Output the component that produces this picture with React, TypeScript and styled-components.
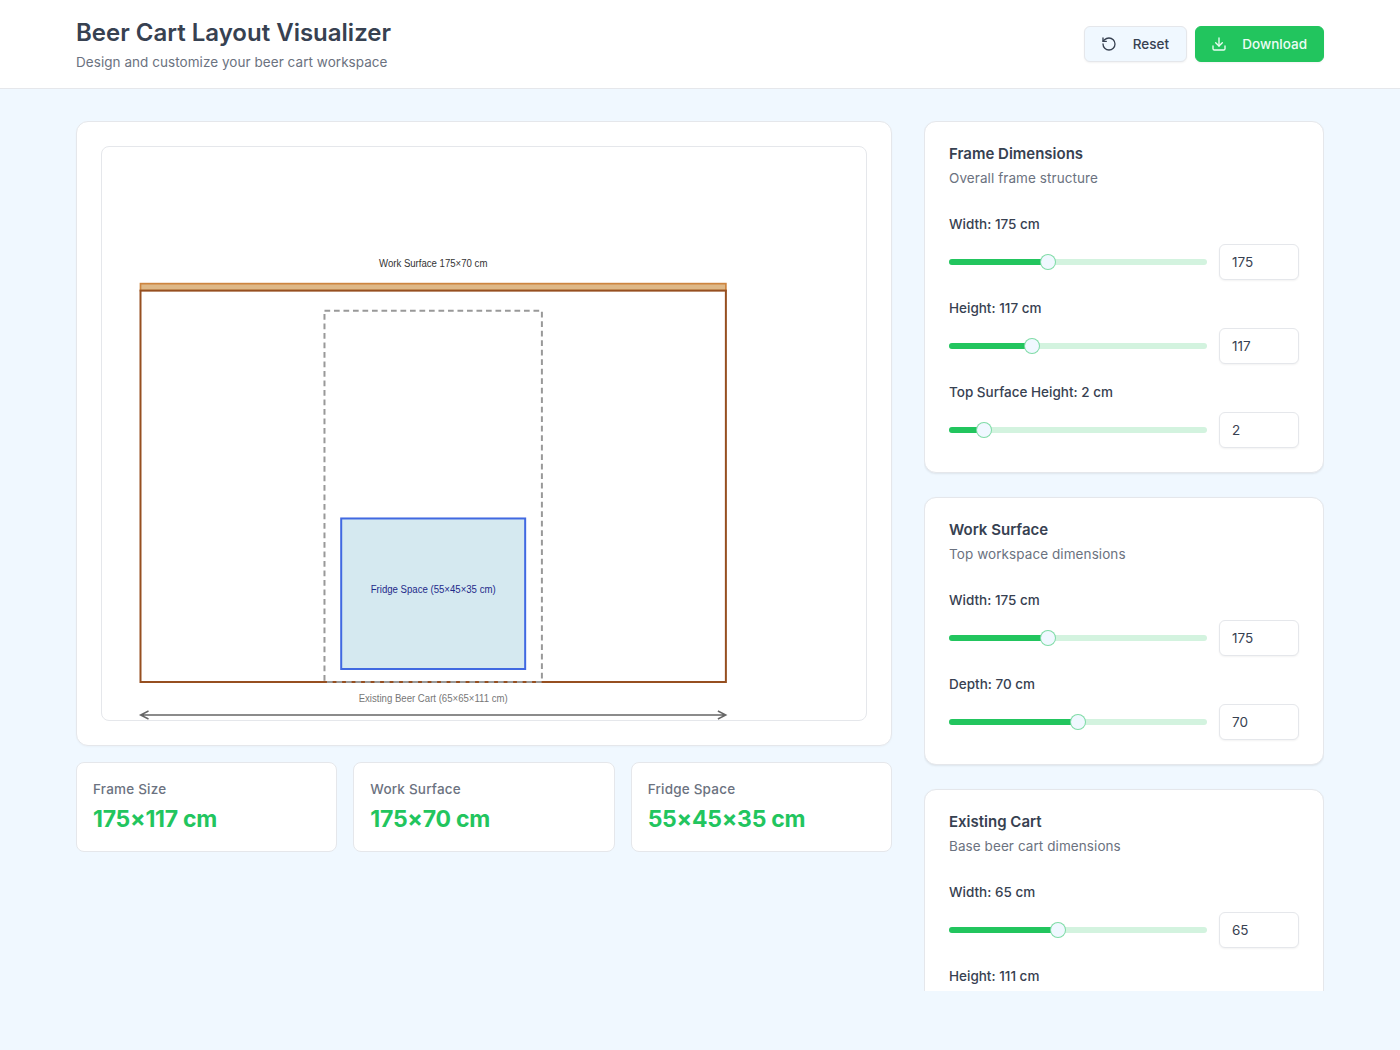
import { useState } from "react";
import type { ReactNode } from "react";
import styled, { createGlobalStyle } from "styled-components";
import * as Slider from "@radix-ui/react-slider";
import { Download, RotateCcw } from "lucide-react";

const defaults = {
  frameWidth: 175,
  frameHeight: 117,
  topHeight: 2,
  surfaceWidth: 175,
  surfaceDepth: 70,
  cartWidth: 65,
  cartHeight: 111,
  fridgeWidth: 55,
  fridgeHeight: 45,
  fridgeDepth: 35,
};

type Dims = typeof defaults;

const sections: {
  title: string;
  note: string;
  rows: { key: keyof Dims; label: string; min: number; max: number }[];
}[] = [
  {
    title: "Frame Dimensions",
    note: "Overall frame structure",
    rows: [
      { key: "frameWidth", label: "Width", min: 100, max: 300 },
      { key: "frameHeight", label: "Height", min: 80, max: 200 },
      { key: "topHeight", label: "Top Surface Height", min: 1, max: 10 },
    ],
  },
  {
    title: "Work Surface",
    note: "Top workspace dimensions",
    rows: [
      { key: "surfaceWidth", label: "Width", min: 100, max: 300 },
      { key: "surfaceDepth", label: "Depth", min: 40, max: 100 },
    ],
  },
  {
    title: "Existing Cart",
    note: "Base beer cart dimensions",
    rows: [
      { key: "cartWidth", label: "Width", min: 40, max: 100 },
      { key: "cartHeight", label: "Height", min: 80, max: 150 },
    ],
  },
];

const SCALE = 3.345;

// the drawing's captions are slightly condensed
const Caption = ({ x, y, fill, children }: { x: number; y: number; fill: string; children: ReactNode }) => (
  <text
    transform={`translate(${x} ${y}) scale(0.96 1)`}
    textAnchor="middle"
    fontFamily="Liberation Sans, sans-serif"
    fontSize="10"
    fill={fill}
  >
    {children}
  </text>
);

const Drawing = ({ dims }: { dims: Dims }) => {
  const w = dims.frameWidth * SCALE;
  const h = dims.frameHeight * SCALE;
  const left = 38.5;
  const base = 535;
  const top = base - h;
  const mid = left + w / 2;
  const cartW = dims.cartWidth * SCALE;
  const cartH = dims.cartHeight * SCALE;
  const fridgeW = dims.fridgeWidth * SCALE;
  const fridgeH = dims.fridgeHeight * SCALE;
  const fridgeBottom = base - 13;

  return (
    <svg width="764" height="573" viewBox="0 0 764 573">
      <Caption x={mid} y={top - 24} fill="#333">
        Work Surface {dims.surfaceWidth}×{dims.surfaceDepth} cm
      </Caption>
      <rect x={left} y={top - 7} width={w} height={7} fill="#deb887" stroke="#cd853f" strokeWidth="1.7" />
      <rect x={left} y={top} width={w} height={h} fill="#fff" stroke="#964f20" strokeWidth="2" />
      <rect
        x={mid - cartW / 2}
        y={base - cartH}
        width={cartW}
        height={cartH}
        fill="none"
        stroke="#999"
        strokeWidth="2"
        strokeDasharray="5.7 3.8"
      />
      <rect
        x={mid - fridgeW / 2}
        y={fridgeBottom - fridgeH}
        width={fridgeW}
        height={fridgeH}
        fill="#d5e9f0"
        stroke="#4169e1"
        strokeWidth="2"
      />
      <Caption x={mid} y={fridgeBottom - fridgeH / 2 - 1} fill="#1e2a8a">
        Fridge Space ({dims.fridgeWidth}×{dims.fridgeHeight}×{dims.fridgeDepth} cm)
      </Caption>
      <Caption x={mid} y={base + 20} fill="#777">
        Existing Beer Cart ({dims.cartWidth}×{dims.cartWidth}×{dims.cartHeight} cm)
      </Caption>
      <path
        d={`M${left} 568H${left + w}M${left + 8} 564L${left} 568L${left + 8} 572M${left + w - 8} 564L${left + w} 568L${left + w - 8} 572`}
        fill="none"
        stroke="#666"
        strokeWidth="1.4"
      />
    </svg>
  );
};

const App = () => {
  const [dims, setDims] = useState<Dims>(defaults);

  const update = (key: keyof Dims, value: number) => {
    setDims({ ...dims, [key]: value });
  };

  return (
    <>
      <GlobalStyle />
      <Header>
        <HeaderInner>
          <div>
            <Title>Beer Cart Layout Visualizer</Title>
            <Subtitle>Design and customize your beer cart workspace</Subtitle>
          </div>
          <Actions>
            <ResetButton type="button" onClick={() => setDims(defaults)}>
              <RotateCcw size={16} />
              Reset
            </ResetButton>
            <DownloadButton type="button">
              <Download size={16} />
              Download
            </DownloadButton>
          </Actions>
        </HeaderInner>
      </Header>
      <Main>
        <LeftColumn>
          <PreviewCard>
            <Canvas>
              <Drawing dims={dims} />
            </Canvas>
          </PreviewCard>
          <Stats>
            <StatCard>
              <StatLabel>Frame Size</StatLabel>
              <StatValue>
                {dims.frameWidth}×{dims.frameHeight} cm
              </StatValue>
            </StatCard>
            <StatCard>
              <StatLabel>Work Surface</StatLabel>
              <StatValue>
                {dims.surfaceWidth}×{dims.surfaceDepth} cm
              </StatValue>
            </StatCard>
            <StatCard>
              <StatLabel>Fridge Space</StatLabel>
              <StatValue>
                {dims.fridgeWidth}×{dims.fridgeHeight}×{dims.fridgeDepth} cm
              </StatValue>
            </StatCard>
          </Stats>
        </LeftColumn>
        <Controls>
          {sections.map((section) => (
            <ControlCard key={section.title}>
              <CardTitle>{section.title}</CardTitle>
              <CardNote>{section.note}</CardNote>
              {section.rows.map((row) => (
                <Field key={row.key}>
                  <FieldLabel>
                    {row.label}: {dims[row.key]} cm
                  </FieldLabel>
                  <FieldRow>
                    <SliderRoot
                      min={row.min}
                      max={row.max}
                      value={[dims[row.key]]}
                      onValueChange={(v: number[]) => update(row.key, v[0])}
                    >
                      <SliderTrack>
                        <SliderRange />
                      </SliderTrack>
                      <SliderThumb />
                    </SliderRoot>
                    <NumberInput
                      type="number"
                      value={dims[row.key]}
                      onChange={(e) => update(row.key, Number(e.target.value))}
                    />
                  </FieldRow>
                </Field>
              ))}
            </ControlCard>
          ))}
        </Controls>
      </Main>
    </>
  );
};

const GlobalStyle = createGlobalStyle`
  * {
    box-sizing: border-box;
  }

  body {
    margin: 0;
    min-height: 100vh;
    background: #f0f8ff;
    color: #374151;
    font-family: Inter, "Noto Sans", sans-serif;
  }
`;

const Header = styled.header`
  height: 89px;
  background: #fff;
  border-bottom: 1px solid #e5e7eb;
`;

const HeaderInner = styled.div`
  width: 1248px;
  height: 88px;
  margin: 0 auto;
  display: flex;
  align-items: center;
  justify-content: space-between;
`;

const Title = styled.h1`
  margin: 0 0 3px;
  font-size: 24px;
  line-height: 32px;
  font-weight: 600;
  color: #374151;
`;

const Subtitle = styled.p`
  margin: 0;
  font-size: 13.5px;
  line-height: 20px;
  letter-spacing: 0.05px;
  color: #6b7280;
`;

const Actions = styled.div`
  display: flex;
  gap: 8px;
`;

const ResetButton = styled.button`
  display: flex;
  align-items: center;
  justify-content: space-between;
  width: 103px;
  height: 36px;
  padding: 0 17px 0 16px;
  background: #f0f8ff;
  border: 1px solid #e5e7eb;
  border-radius: 6px;
  box-shadow: 0 1px 2px rgba(0, 0, 0, 0.05);
  color: #374151;
  font: 500 13.5px Inter, sans-serif;
`;

const DownloadButton = styled(ResetButton)`
  width: 129px;
  padding: 0 16px 0 15px;
  background: #22c55e;
  border-color: #22c55e;
  color: #ecfdf5;
`;

const Main = styled.main`
  width: 1248px;
  margin: 0 auto;
  padding-top: 32px;
  display: grid;
  grid-template-columns: 1fr 400px;
  gap: 32px;
  align-items: start;
`;

const LeftColumn = styled.div`
  display: flex;
  flex-direction: column;
  gap: 16px;
`;

const PreviewCard = styled.section`
  padding: 24px;
  background: #fff;
  border: 1px solid #e5e7eb;
  border-radius: 12px;
  box-shadow: 0 1px 2px rgba(0, 0, 0, 0.03);
`;

const Canvas = styled.div`
  height: 575px;
  background: #fff;
  border: 1px solid #e5e7eb;
  border-radius: 8px;
  overflow: hidden;

  svg {
    display: block;
  }
`;

const Stats = styled.div`
  display: grid;
  grid-template-columns: repeat(3, 1fr);
  gap: 16px;
`;

const StatCard = styled.div`
  padding: 16px;
  background: #fff;
  border: 1px solid #e5e7eb;
  border-radius: 8px;
`;

const StatLabel = styled.div`
  font-size: 13.5px;
  line-height: 20px;
  font-weight: 500;
  letter-spacing: 0.2px;
  color: #6b7280;
`;

const StatValue = styled.div`
  margin-top: 4px;
  font-size: 23px;
  line-height: 32px;
  font-weight: 700;
  letter-spacing: -0.25px;
  color: #22c55e;
`;

const Controls = styled.aside`
  height: 870px;
  display: flex;
  flex-direction: column;
  gap: 24px;
  overflow-y: auto;
  scrollbar-width: none;
`;

const ControlCard = styled.section`
  flex: none;
  padding: 24px;
  background: #fff;
  border: 1px solid #e5e7eb;
  border-radius: 12px;
  box-shadow: 0 1px 2px rgba(0, 0, 0, 0.08);
`;

const CardTitle = styled.h2`
  margin: 0 0 6px;
  font-size: 15px;
  line-height: 16px;
  font-weight: 600;
  color: #374151;
`;

const CardNote = styled.p`
  margin: 0 0 26px;
  font-size: 13.5px;
  line-height: 20px;
  letter-spacing: 0.08px;
  color: #6b7280;
`;

const Field = styled.div`
  margin-bottom: 18px;

  &:last-child {
    margin-bottom: 0;
  }
`;

const FieldLabel = styled.div`
  height: 30px;
  font-size: 13.5px;
  line-height: 20px;
  font-weight: 500;
  color: #374151;
`;

const FieldRow = styled.div`
  display: flex;
  align-items: center;
  gap: 12px;
`;

const SliderRoot = styled(Slider.Root)`
  position: relative;
  flex: 1;
  height: 16px;
  display: flex;
  align-items: center;
  touch-action: none;
  user-select: none;
`;

const SliderTrack = styled(Slider.Track)`
  position: relative;
  flex: 1;
  height: 6px;
  background: #d3f3df;
  border-radius: 999px;
  overflow: hidden;
`;

const SliderRange = styled(Slider.Range)`
  position: absolute;
  height: 100%;
  background: #22c55e;
`;

const SliderThumb = styled(Slider.Thumb)`
  display: block;
  width: 16px;
  height: 16px;
  background: #f0f8ff;
  border: 1px solid rgba(34, 197, 94, 0.55);
  border-radius: 50%;
  outline: none;
`;

const NumberInput = styled.input`
  width: 80px;
  height: 36px;
  padding: 0 12px;
  background: #fff;
  border: 1px solid #e5e7eb;
  border-radius: 6px;
  box-shadow: 0 1px 2px rgba(0, 0, 0, 0.05);
  color: #374151;
  font: 400 13.5px Inter, sans-serif;
  appearance: textfield;

  &::-webkit-outer-spin-button,
  &::-webkit-inner-spin-button {
    appearance: none;
    margin: 0;
  }
`;

export default App;
